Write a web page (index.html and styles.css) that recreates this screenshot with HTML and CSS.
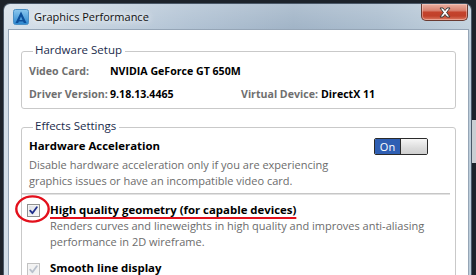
FILE: index.html
```html
<!DOCTYPE html>
<html>
<head>
<meta charset="utf-8">
<link rel="stylesheet" href="styles.css">
</head>
<body>
<div class="window">
  <div class="titlebar">
    <div class="app">
      <svg class="app-icon" width="16" height="16" viewBox="0 0 16 16">
        <defs>
          <linearGradient id="ig" x1="0" y1="0" x2="0" y2="1">
            <stop offset="0" stop-color="#8cc8ee"/>
            <stop offset="1" stop-color="#2a86cf"/>
          </linearGradient>
        </defs>
        <rect x="0.5" y="0.5" width="15" height="15" rx="2" fill="url(#ig)" stroke="#4a8fc4"/>
        <polygon points="8,2.5 13.5,14 10.8,14 8,7.5 5.2,14 2.5,14" fill="#0d4f9a"/>
        <polygon points="6.2,11 9.8,11 10.5,12.6 5.5,12.6" fill="#0d4f9a"/>
      </svg>
      <span class="title">Graphics Performance</span>
    </div>
    <div class="close">
      <svg width="14" height="11" viewBox="0 0 14 11">
        <path d="M2 1 L5 1 L7 3.5 L9 1 L12 1 L8.6 5.5 L12 10 L9 10 L7 7.5 L5 10 L2 10 L5.4 5.5 Z" fill="#fff" stroke="#3a3a3a" stroke-width="1" stroke-linejoin="round"/>
      </svg>
    </div>
  </div>
  <div class="client">
    <fieldset class="group group-hw">
      <legend>Hardware Setup</legend>
      <div class="info-grid">
        <span class="lbl">Video Card:</span>
        <span class="val">NVIDIA GeForce GT 650M</span>
        <span></span>
        <span></span>
        <span class="lbl">Driver Version:</span>
        <span class="val">9.18.13.4465</span>
        <span class="lbl">Virtual Device:</span>
        <span class="val">DirectX 11</span>
      </div>
    </fieldset>
    <fieldset class="group group-fx">
      <legend>Effects Settings</legend>
      <div class="setting">
        <div class="setting-text">
          <div class="setting-title">Hardware Acceleration</div>
          <div class="desc">Disable hardware acceleration only if you are experiencing<br>graphics issues or have an incompatible video card.</div>
        </div>
        <div class="toggle"><span class="toggle-on">On</span><span class="toggle-knob"></span></div>
      </div>
      <div class="sep"></div>
      <div class="check-item">
        <svg class="annot" width="35" height="28" viewBox="0 0 35 28"><ellipse cx="17.5" cy="14" rx="16.2" ry="12.6" fill="none" stroke="#e3101c" stroke-width="2.4"/></svg>
        <span class="checkbox checked">
          <svg width="9" height="9" viewBox="0 0 9 9"><path d="M1.2 4.6 L3.4 7.2 L7.8 1.2" fill="none" stroke="#1f2f8c" stroke-width="1.8" stroke-linecap="round" stroke-linejoin="round"/></svg>
        </span>
        <div class="check-text">
          <div class="setting-title underlined">High quality geometry (for capable devices)</div>
          <div class="desc tight">Renders curves and lineweights in high quality and improves anti-aliasing<br>performance in 2D wireframe.</div>
        </div>
      </div>
      <div class="check-item second">
        <span class="checkbox disabled">
          <svg width="9" height="9" viewBox="0 0 9 9"><path d="M1.2 4.6 L3.4 7.2 L7.8 1.2" fill="none" stroke="#b9c0cc" stroke-width="1.8" stroke-linecap="round" stroke-linejoin="round"/></svg>
        </span>
        <div class="check-text">
          <div class="setting-title">Smooth line display</div>
        </div>
      </div>
    </fieldset>
  </div>
</div>
</body>
</html>
```
FILE: styles.css
```css
* { box-sizing: border-box; }
html, body { margin: 0; padding: 0; }
body {
  width: 476px;
  height: 275px;
  overflow: hidden;
  font-family: "Open Sans", "Noto Sans", sans-serif;
  background:
    linear-gradient(to bottom, transparent 120px, #c9ced3 120px, #c9ced3 163px, transparent 163px) right top / 4px 100% no-repeat,
    #1d232b;
}
.window {
  margin: 3px 0 0 3px;
  width: 469px;
  height: 272px;
  overflow: hidden;
  border: 1px solid #4a5868;
  border-bottom: none;
  border-radius: 7px 7px 0 0;
  padding: 0 2px 0 4px;
  background:
    linear-gradient(to bottom, rgba(255,255,255,0.25), rgba(255,255,255,0) 40px),
    linear-gradient(to right, #d3dee8 0%, #c1d0de 18%, #a9bccf 40%, #97acc1 62%, #a3b7ca 80%, #bccdda 100%);
}
.titlebar {
  height: 25px;
  display: flex;
  justify-content: space-between;
  align-items: flex-start;
}
.app {
  display: flex;
  align-items: center;
  padding: 5px 0 0 5px;
  gap: 5px;
}
.app-icon { display: block; }
.title {
  font-size: 11px;
  color: #111;
  line-height: 16px;
  text-shadow: 0 0 6px #fff, 0 0 10px rgba(255,255,255,0.9);
}
.close {
  width: 47px;
  height: 17px;
  margin-right: 1px;
  border: 1px solid #6a3a30;
  border-top: none;
  border-radius: 0 0 5px 5px;
  background: linear-gradient(to bottom, #eab0a2 0%, #d88270 40%, #c4432c 52%, #c0412a 75%, #dc7a62 100%);
  box-shadow: inset 0 0 0 1px rgba(255,220,210,0.45);
  display: flex;
  align-items: center;
  justify-content: center;
}
.close svg { display: block; }
.client {
  height: 260px;
  background: #fff;
  border: 1px solid #95a5b6;
  border-bottom: none;
  padding: 0 12px 0 12px;
}
.group {
  margin: 0;
  border: 1px solid #c9c9c9;
  border-radius: 3px;
  padding: 0 7px;
  min-width: 0;
}
.group legend {
  font-size: 11.5px;
  line-height: 16px;
  padding: 0 3px 3px 2px;
  margin-left: 4px;
  color: #1b2c4c;
}
.group-hw {
  margin-top: 12px;
  padding-bottom: 5px;
}
.info-grid {
  display: grid;
  grid-template-columns: 81px 131px 80px auto;
  grid-auto-rows: 19px;
  row-gap: 4px;
  align-items: center;
  font-size: 10.6px;
  font-weight: 700;
  white-space: nowrap;
}
.lbl { color: #6f6f6f; }
.val { color: #000; }
.group-fx {
  margin-top: 9px;
  height: 200px;
  padding-top: 1px;
}
.setting {
  display: flex;
  justify-content: space-between;
  align-items: flex-start;
}
.setting-title {
  font-size: 11.4px;
  font-weight: 700;
  line-height: 16px;
  color: #000;
  white-space: nowrap;
}
.desc {
  margin-top: 3px;
  font-size: 11px;
  line-height: 16px;
  color: #6c6c6c;
  white-space: nowrap;
}
.desc.tight { margin-top: 0; }
.toggle {
  display: flex;
  width: 54px;
  height: 17px;
  margin-right: 20px;
  border: 1px solid #2b2b2b;
  border-radius: 2px;
  overflow: hidden;
}
.toggle-on {
  width: 26px;
  background: #2f5fb3;
  color: #fff;
  font-size: 11px;
  line-height: 15px;
  text-align: center;
  border-right: 1px solid #2b2b2b;
}
.toggle-knob {
  flex: 1;
  background: linear-gradient(to bottom, #f6f6f6, #dcdcdc 60%, #cfcfcf);
}
.sep {
  margin: 4px -2px 0 -7px;
  height: 2px;
  border-top: 1px solid #c6c6c6;
  border-bottom: 1px solid #e2e2e2;
}
.check-item {
  position: relative;
  display: flex;
  align-items: flex-start;
  gap: 10px;
  margin-top: 7px;
  margin-left: -2px;
}
.check-item.second { margin-top: 10px; }
.annot {
  position: absolute;
  left: -12px;
  top: -7px;
}
.checkbox {
  flex: none;
  width: 13px;
  height: 13px;
  margin-top: 2px;
  border: 1px solid #8e8f8f;
  background: linear-gradient(to bottom right, #dcdfe4, #f8f8f8);
  box-shadow: inset 0 0 0 1px #f4f4f4;
  display: flex;
  align-items: center;
  justify-content: center;
}
.checkbox svg { display: block; }
.checkbox.disabled {
  margin-top: 3px;
  border-color: #c2c2c2;
  background: #f2f2f2;
}
.underlined {
  text-decoration: underline;
  text-decoration-color: #e3101c;
  text-decoration-thickness: 2px;
  text-underline-offset: 3px;
}
```
